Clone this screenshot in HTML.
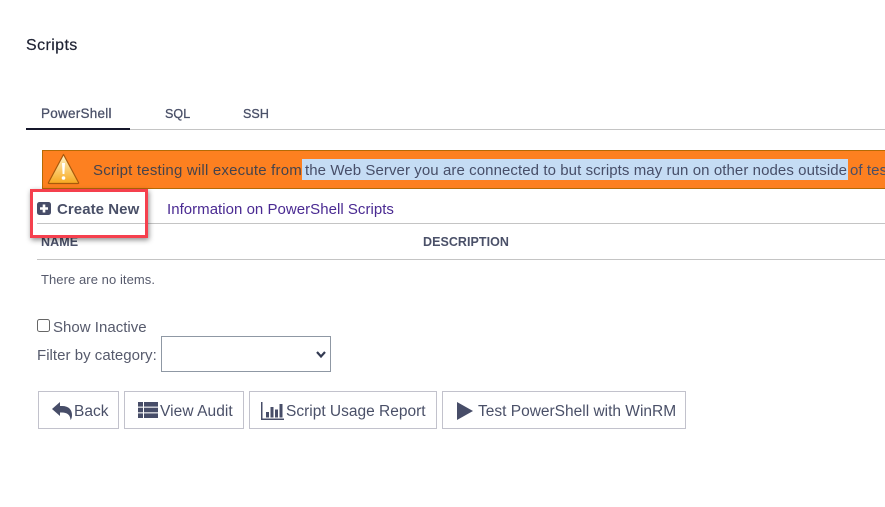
<!DOCTYPE html>
<html><head><meta charset="utf-8"><title>Scripts</title>
<style>
html,body{margin:0;padding:0;background:#fff;width:885px;height:507px;overflow:hidden}
body{position:relative;font-family:"Liberation Sans",sans-serif;color:#4a5068}
.t{position:absolute;white-space:nowrap;line-height:20px}
.a{position:absolute;box-sizing:border-box}
.btn{position:absolute;box-sizing:border-box;top:391px;height:38px;border:1px solid #c2c2cc;background:#fff}
svg{position:absolute;display:block}
</style></head><body>
<div class="t" style="left:26px;top:36px;font-size:16px;color:#1e2233;letter-spacing:.4px;-webkit-text-stroke:.2px #1e2233">Scripts</div>

<div class="a" style="left:26px;top:129px;width:859px;height:1px;background:#c4c4c4"></div>
<div class="a" style="left:26px;top:128px;width:104px;height:2px;background:#15172a"></div>
<div class="t" style="left:41px;top:104px;font-size:13.5px;letter-spacing:.25px;-webkit-text-stroke:.3px #4a5068">PowerShell</div>
<div class="t" style="left:165px;top:104px;font-size:12.5px;letter-spacing:.1px;-webkit-text-stroke:.3px #4a5068">SQL</div>
<div class="t" style="left:243px;top:104px;font-size:12.5px;letter-spacing:.1px;-webkit-text-stroke:.3px #4a5068">SSH</div>

<div class="a" style="left:42px;top:150px;width:850px;height:39px;background:#fd8020;border:1px solid #b56a05"></div>
<svg style="left:47px;top:153px" width="33" height="32" viewBox="0 0 33 32">
<defs><linearGradient id="g" x1="0" y1="0" x2="0" y2="1"><stop offset="0" stop-color="#fff3c8"/><stop offset="1" stop-color="#f7a81e"/></linearGradient></defs>
<path d="M16.5 1.5 L31.5 29.5 Q32 30.5 31 30.5 L2 30.5 Q1 30.5 1.5 29.5 Z" fill="url(#g)" stroke="#a8590c" stroke-width="1.2" stroke-linejoin="round"/>
<path d="M15 10 h3 l-.6 11 h-1.8 Z" fill="#fff"/><circle cx="16.5" cy="25" r="1.8" fill="#fff"/>
</svg>
<div class="a" style="left:302px;top:159px;width:546px;height:21px;background:#c5dcf4"></div>
<div class="t" style="left:93px;top:161px;font-size:15px;color:#45434c;letter-spacing:.2px">Script testing will execute from</div>
<div class="t" style="left:305px;top:161px;font-size:15px;color:#474e68;letter-spacing:.08px">the Web Server you are connected to but scripts may run on other nodes outside</div>
<div class="t" style="left:850px;top:161px;font-size:15px;color:#474e68;letter-spacing:.08px">of tes</div>

<div class="a" style="left:37px;top:223px;width:848px;height:1px;background:#c4c4c4"></div>
<div class="a" style="left:37px;top:259px;width:848px;height:1px;background:#c4c4c4"></div>

<svg style="left:37px;top:202px" width="14" height="13" viewBox="0 0 14 13"><rect width="14" height="13" rx="2.5" fill="#474d68"/><path d="M7 2.5v8M3 6.5h8" stroke="#fff" stroke-width="2.6"/></svg>
<div class="t" style="left:57px;top:200px;font-size:15px;font-weight:700;color:#4a5068;letter-spacing:.06px">Create New</div>
<div class="t" style="left:167px;top:200px;font-size:15px;color:#4a2a92;letter-spacing:.03px">Information on PowerShell Scripts</div>

<div class="t" style="left:41px;top:232px;font-size:12.5px;font-weight:700;color:#4a5068;letter-spacing:.1px">NAME</div>
<div class="t" style="left:423px;top:232px;font-size:12.5px;font-weight:700;color:#4a5068;letter-spacing:.05px">DESCRIPTION</div>
<div class="a" style="left:30px;top:189px;width:118px;height:49px;border:3px solid #f5404e;box-shadow:1px 2px 5px rgba(0,0,0,.45)"></div>

<div class="t" style="left:41px;top:270px;font-size:13px;color:#565a6c;letter-spacing:.07px">There are no items.</div>
<div class="a" style="left:37px;top:319px;width:13px;height:13px;border:1px solid #666;border-radius:2.5px;background:#fff"></div>
<div class="t" style="left:53px;top:318px;font-size:15px;color:#565a6c;letter-spacing:.02px">Show Inactive</div>
<div class="t" style="left:37px;top:346px;font-size:15px;color:#565a6c;letter-spacing:.03px">Filter by category:</div>
<div class="a" style="left:161px;top:336px;width:170px;height:36px;border:1px solid #8f98a4;background:#fff"></div>
<svg style="left:315px;top:350px" width="12" height="9" viewBox="0 0 12 9"><path d="M2 2 L6 6.5 L10 2" fill="none" stroke="#333a52" stroke-width="2.2"/></svg>

<div class="btn" style="left:38px;width:81px"></div>
<svg style="left:52px;top:402px" width="21" height="18" viewBox="0 0 21 18"><path d="M0 7 L8 0 V4 H10 C17 4 20 8 20 13 C20 15 19.5 17 18.5 18 C18.5 13 15 10.5 10 10.5 H8 V14 Z" fill="#474d68"/></svg>
<div class="t" style="left:74px;top:402px;font-size:15.5px;color:#4a5068">Back</div>
<div class="btn" style="left:124px;width:120px"></div>
<svg style="left:138px;top:402px" width="20" height="16" viewBox="0 0 20 16" fill="#474d68"><rect width="5" height="4.6"/><rect x="6" width="14" height="4.6"/><rect y="5.7" width="5" height="4.6"/><rect x="6" y="5.7" width="14" height="4.6"/><rect y="11.4" width="5" height="4.6"/><rect x="6" y="11.4" width="14" height="4.6"/></svg>
<div class="t" style="left:160px;top:402px;font-size:15.5px;color:#4a5068;letter-spacing:.07px">View Audit</div>
<div class="btn" style="left:249px;width:188px"></div>
<svg style="left:261px;top:402px" width="23" height="18" viewBox="0 0 23 18" fill="#474d68"><path d="M.75 0V17.25H23" fill="none" stroke="#474d68" stroke-width="1.5"/><rect x="5" y="10" width="3" height="5.5"/><rect x="9.5" y="5" width="3" height="10.5"/><rect x="14" y="7.5" width="3" height="8"/><rect x="18.5" y="2" width="3" height="13.5"/></svg>
<div class="t" style="left:286px;top:402px;font-size:15.5px;color:#4a5068">Script Usage Report</div>
<div class="btn" style="left:442px;width:244px"></div>
<svg style="left:457px;top:402px" width="17" height="18" viewBox="0 0 17 18"><path d="M0 0 L16 9 L0 18 Z" fill="#474d68"/></svg>
<div class="t" style="left:478px;top:402px;font-size:15.5px;color:#4a5068">Test PowerShell with WinRM</div>
</body></html>
